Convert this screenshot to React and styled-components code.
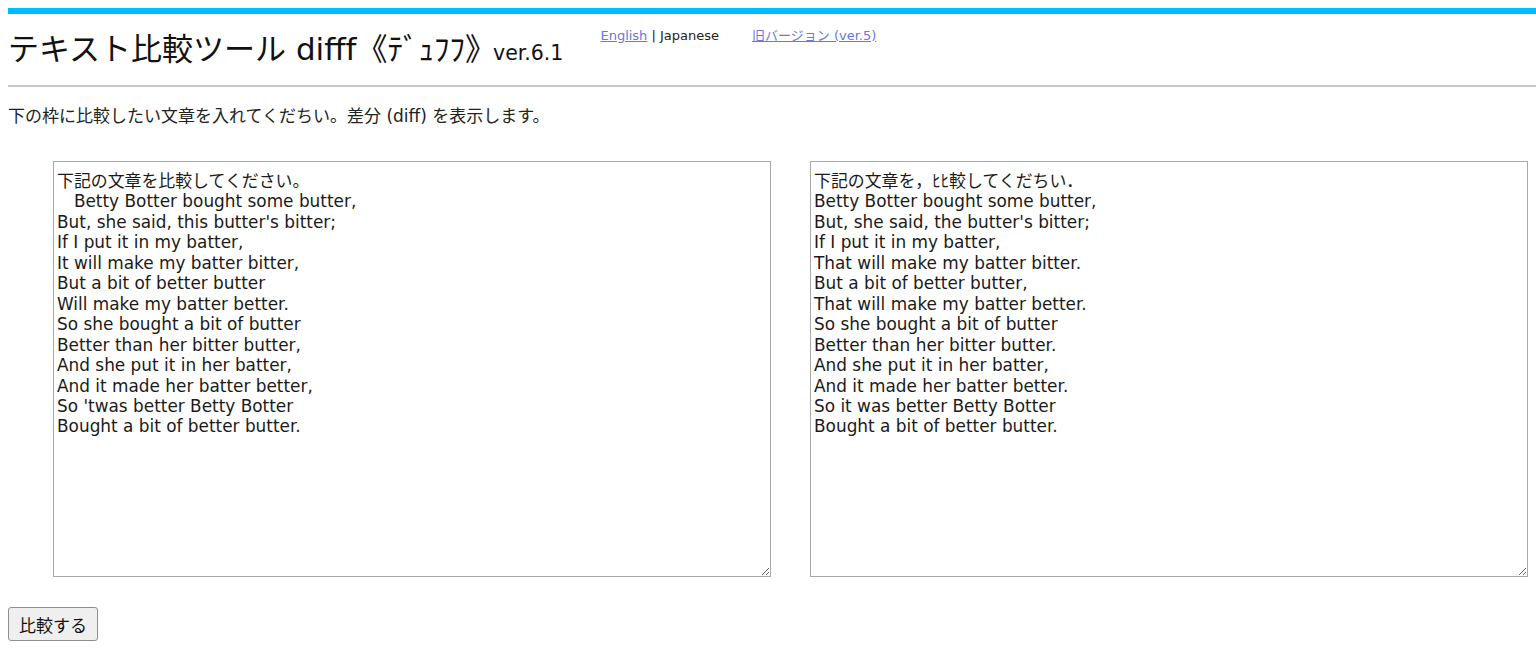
import React from "react";
import styled, { createGlobalStyle } from "styled-components";

const GlobalStyle = createGlobalStyle`
  html, body {
    margin: 0;
    background: #ffffff;
  }
  body {
    padding: 8px 0 0 8px;
    font-family: "DejaVu Sans", Verdana, "Noto Sans CJK JP", sans-serif;
    color: #222;
    overflow: hidden;
  }
`;

const TopBar = styled.div`
  height: 6px;
  background-color: #00bbff;
`;

const Header = styled.div`
  display: flex;
  align-items: flex-start;
  padding-top: 14px;
`;

const Title = styled.h1`
  margin: 0;
  padding-top: 3px;
  font-size: 31px;
  font-weight: normal;
  line-height: 36px;
  color: #111;
  white-space: nowrap;
`;

const Version = styled.span`
  font-size: 20.5px;
  margin-left: -3px;
`;

const Nav = styled.div`
  display: flex;
  gap: 33px;
  margin-left: 37px;
  font-size: 13px;
  line-height: 16px;
  color: #222;
`;

const Link = styled.a`
  color: #6a78d8;
  text-decoration: underline;
  cursor: pointer;
`;

const Rule = styled.hr`
  margin: 14px 0 0 0;
  border: none;
  border-top: 2px solid #c8c8c8;
`;

const Lead = styled.p`
  margin: 19px 0 0 0;
  font-size: 17px;
  line-height: 20px;
  color: #222;
`;

const Boxes = styled.div`
  display: grid;
  grid-template-columns: 718px 718px;
  column-gap: 39px;
  padding-left: 45px;
  margin-top: 35px;
`;

const TextBox = styled.textarea`
  box-sizing: border-box;
  width: 718px;
  height: 416px;
  margin: 0;
  padding: 9px 3px 2px 3px;
  border: 1px solid #a9a9a9;
  border-radius: 0;
  font-family: "DejaVu Sans", Verdana, "Noto Sans CJK JP", sans-serif;
  font-size: 16.9px;
  line-height: 20.45px;
  color: #1a1a1a;
  resize: both;
  outline: none;
`;

const Actions = styled.div`
  margin-top: 30px;
`;

const Button = styled.button`
  height: 34px;
  padding: 0 10px;
  font-family: "DejaVu Sans", "Noto Sans CJK JP", sans-serif;
  font-size: 17px;
  color: #111;
  background-color: #efefef;
  border: 1px solid #8f8f8f;
  border-radius: 3px;
`;

const leftText = `下記の文章を比較してください。
　Betty Botter bought some butter,
But, she said, this butter's bitter;
If I put it in my batter,
It will make my batter bitter,
But a bit of better butter
Will make my batter better.
So she bought a bit of butter
Better than her bitter butter,
And she put it in her batter,
And it made her batter better,
So 'twas better Betty Botter
Bought a bit of better butter.`;

const rightText = `下記の文章を，ﾋﾋ較してくだちい．
Betty Botter bought some butter,
But, she said, the butter's bitter;
If I put it in my batter,
That will make my batter bitter.
But a bit of better butter,
That will make my batter better.
So she bought a bit of butter
Better than her bitter butter.
And she put it in her batter,
And it made her batter better.
So it was better Betty Botter
Bought a bit of better butter.`;

export default function App() {
  return (
    <>
      <GlobalStyle />
      <TopBar />
      <Header>
        <Title>
          テキスト比較ツール difff《ﾃﾞｭﾌﾌ》<Version>ver.6.1</Version>
        </Title>
        <Nav>
          <span>
            <Link>English</Link> | Japanese
          </span>
          <Link>旧バージョン (ver.5)</Link>
        </Nav>
      </Header>
      <Rule />
      <Lead>下の枠に比較したい文章を入れてくだちい。差分 (diff) を表示します。</Lead>
      <Boxes>
        <TextBox defaultValue={leftText} spellCheck={false} />
        <TextBox defaultValue={rightText} spellCheck={false} />
      </Boxes>
      <Actions>
        <Button>比較する</Button>
      </Actions>
    </>
  );
}
